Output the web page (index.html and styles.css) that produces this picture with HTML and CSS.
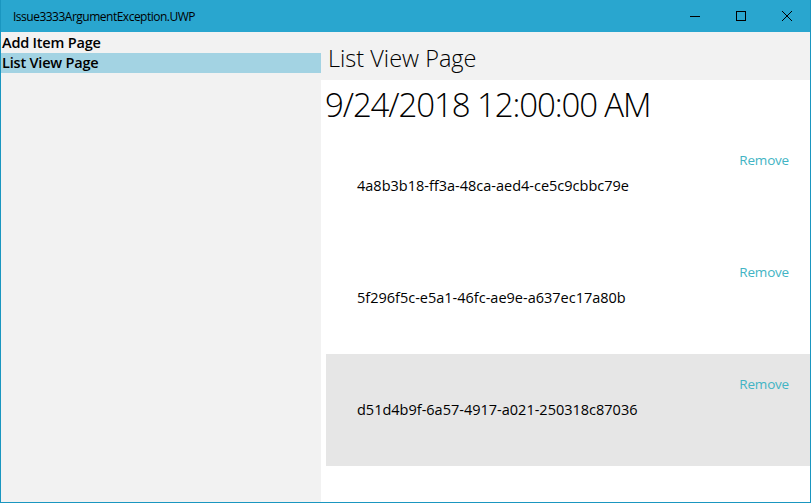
FILE: index.html
```html
<!DOCTYPE html>
<html>
<head>
<meta charset="utf-8">
<link rel="stylesheet" href="styles.css">
</head>
<body>
<div class="window">
  <div class="titlebar">
    <div class="title">Issue3333ArgumentException.UWP</div>
    <div class="caption">
      <div class="cbtn"><svg width="10" height="10" viewBox="0 0 10 10"><path d="M0 5.5H10" stroke="#000" stroke-width="1"/></svg></div>
      <div class="cbtn"><svg width="10" height="10" viewBox="0 0 10 10"><rect x="0.5" y="0.5" width="9" height="9" fill="none" stroke="#000" stroke-width="1"/></svg></div>
      <div class="cbtn"><svg width="10" height="10" viewBox="0 0 10 10"><path d="M0 0L10 10M10 0L0 10" stroke="#000" stroke-width="1"/></svg></div>
    </div>
  </div>
  <div class="body">
    <div class="nav">
      <div class="navitem">Add Item Page</div>
      <div class="navitem selected">List View Page</div>
    </div>
    <div class="main">
      <div class="header">List View Page</div>
      <div class="content">
        <div class="date">9/24/2018 12:00:00 AM</div>
        <div class="list">
          <div class="item">
            <div class="remove">Remove</div>
            <div class="guid">4a8b3b18-ff3a-48ca-aed4-ce5c9cbbc79e</div>
          </div>
          <div class="item">
            <div class="remove">Remove</div>
            <div class="guid">5f296f5c-e5a1-46fc-ae9e-a637ec17a80b</div>
          </div>
          <div class="item hover">
            <div class="remove">Remove</div>
            <div class="guid">d51d4b9f-6a57-4917-a021-250318c87036</div>
          </div>
        </div>
      </div>
    </div>
  </div>
</div>
</body>
</html>
```
FILE: styles.css
```css
* { box-sizing: border-box; }
html, body { margin: 0; padding: 0; }
body { width: 811px; height: 503px; overflow: hidden; font-family: "Open Sans", "Noto Sans", sans-serif; }
.window { width: 811px; height: 503px; border: 1px solid #1a96c0; border-top: none; display: flex; flex-direction: column; background: #fff; }
.titlebar { height: 32px; background: #29a6cf; display: flex; align-items: center; justify-content: space-between; flex-shrink: 0; }
.title { font-size: 12px; padding-left: 12px; color: #000; letter-spacing: -0.5px; }
.caption { display: flex; height: 100%; }
.cbtn { width: 46px; height: 100%; display: flex; align-items: center; justify-content: center; }
.body { flex: 1; display: flex; min-height: 0; }
.nav { width: 320px; background: #f2f2f2; padding-top: 1px; flex-shrink: 0; }
.navitem { height: 20px; line-height: 20px; font-size: 14.5px; font-weight: 600; padding-left: 1px; color: #000; letter-spacing: -0.2px; }
.navitem.selected { background: #a3d3e3; }
.main { flex: 1; display: flex; flex-direction: column; }
.header { height: 48px; background: #f2f2f2; font-size: 23.5px; font-weight: 300; padding-left: 7px; line-height: 52px; color: #000; }
.content { flex: 1; padding-left: 5px; }
.date { font-size: 33px; font-weight: 300; height: 50px; line-height: 50px; margin-left: -1px; letter-spacing: -1.1px; color: #000; }
.list { display: flex; flex-direction: column; }
.item { height: 112px; display: flex; flex-direction: column; padding: 18px 21px 0 31px; }
.item.hover { background: #e6e6e6; }
.remove { align-self: flex-end; font-size: 13.5px; color: #42b4c4; line-height: 24px; letter-spacing: -0.2px; }
.guid { font-size: 14.5px; line-height: 28px; color: #000; }
```
